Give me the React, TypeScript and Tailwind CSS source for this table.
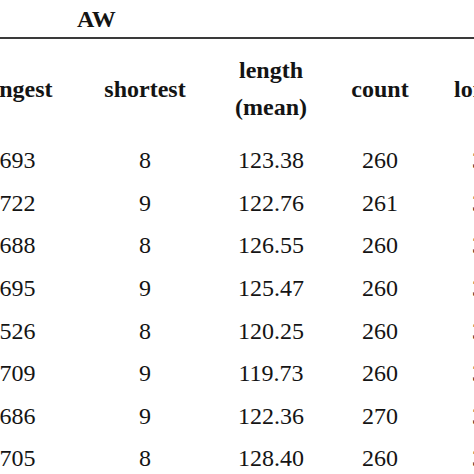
const rows: [string, string, string, string, string][] = [
  ["1693", "8", "123.38", "260", "345"],
  ["1722", "9", "122.76", "261", "352"],
  ["1688", "8", "126.55", "260", "347"],
  ["1695", "9", "125.47", "260", "349"],
  ["1526", "8", "120.25", "260", "338"],
  ["1709", "9", "119.73", "260", "351"],
  ["1686", "9", "122.36", "270", "346"],
  ["1705", "8", "128.40", "260", "350"],
];

const cols = "grid grid-cols-[152px_106px_146px_72px_148px]";

export default function App() {
  return (
    <div
      className="w-[474px] h-[474px] overflow-hidden bg-white text-[#141414] text-[24px]"
      style={{ fontFamily: '"Liberation Serif", "Times New Roman", serif' }}
    >
      <div className="h-[37px] flex items-center pl-[77px] font-bold leading-none">AW</div>
      <div className="h-[2px] bg-[#3a3a3a]" />
      <div className="ml-[-60px] w-[624px]">
        <div className={`${cols} h-[100px] items-center text-center font-bold`}>
          <div className="pl-[1px]">longest</div>
          <div>shortest</div>
          <div className="leading-[37px]">
            length
            <br />
            (mean)
          </div>
          <div>count</div>
          <div>longest</div>
        </div>
        {rows.map((r, i) => (
          <div key={i} className={`${cols} h-[42.6px] items-center text-center leading-none`}>
            {r.map((c, j) => (
              <div key={j} className={j === 0 ? "pr-[9px]" : ""}>
                {c}
              </div>
            ))}
          </div>
        ))}
      </div>
    </div>
  );
}
